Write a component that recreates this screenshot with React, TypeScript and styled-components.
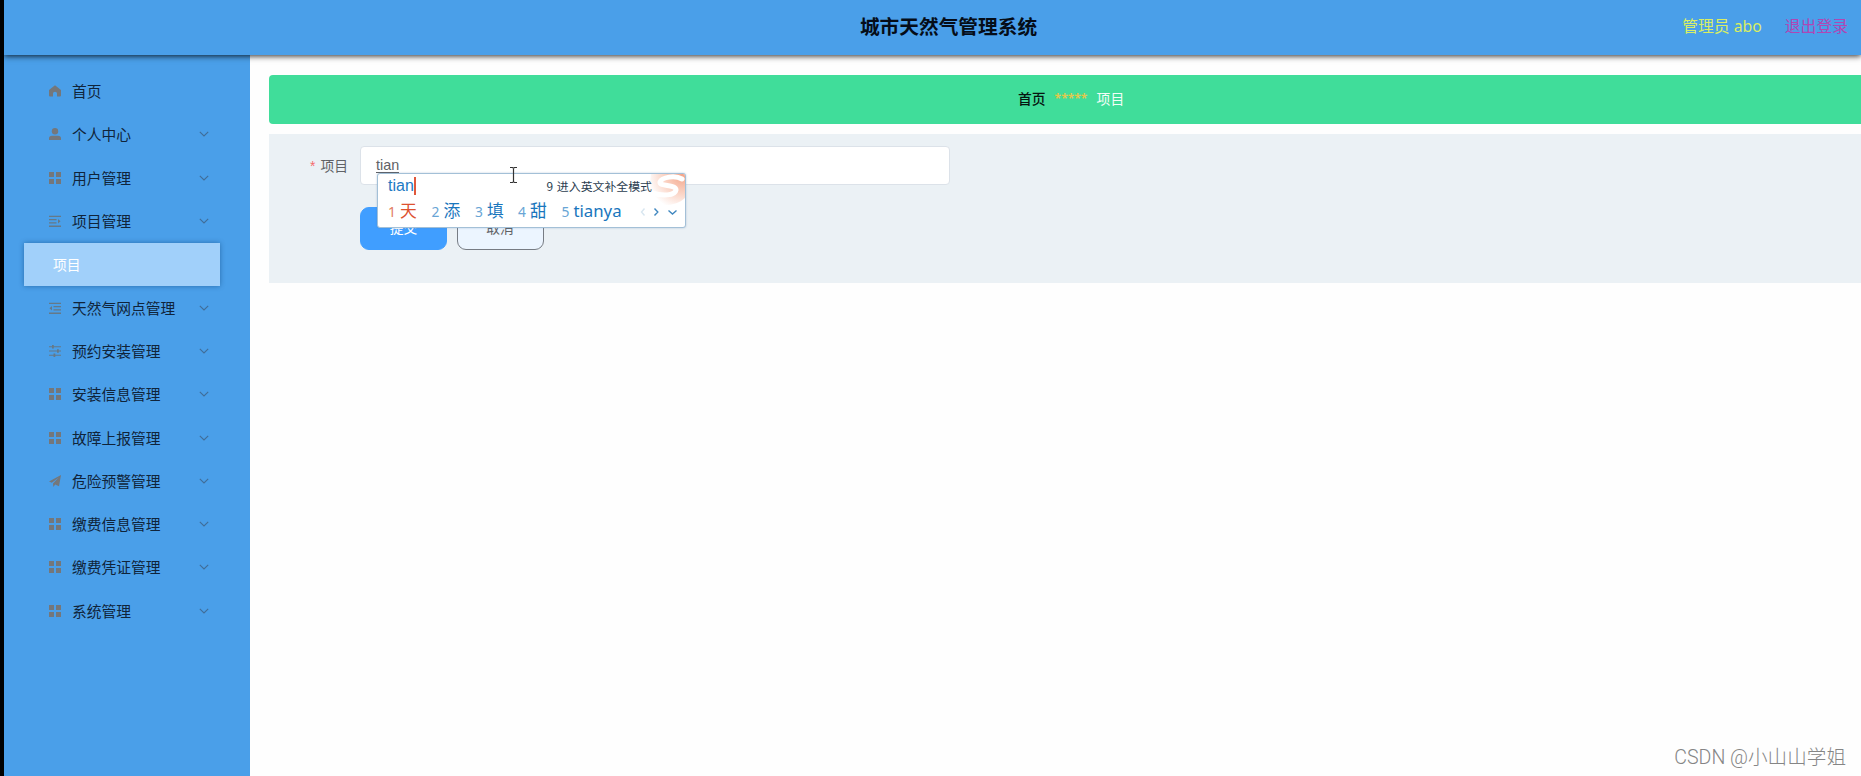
import React from "react";
import styled, { createGlobalStyle } from "styled-components";

const GlobalStyle = createGlobalStyle`
  * { box-sizing: border-box; }
  body { margin: 0; background: #fefefe; overflow: hidden; }
  #root { font-family: "Noto Sans CJK SC", sans-serif; }
`;

const Page = styled.div`
  display: flex;
  flex-direction: column;
  position: relative;
  height: 776px;
  width: 1861px;
  overflow: hidden;
  border-left: 4px solid #000;
`;

const Header = styled.header`
  position: relative;
  z-index: 2;
  flex: none;
  display: grid;
  grid-template-columns: 1fr auto 1fr;
  align-items: center;
  height: 55px;
  padding: 0 13px 4px 45px;
  background: #4a9fe9;
  box-shadow: 0 1px 6px rgba(0, 0, 0, 0.85);
`;

const Title = styled.h1`
  grid-column: 2;
  margin: 0;
  font-size: 19.7px;
  line-height: 30px;
  font-weight: 700;
  color: #050d18;
`;

const Account = styled.div`
  display: flex;
  justify-content: flex-end;
  gap: 23px;
  font-size: 15.8px;
  line-height: 24px;
`;

const AccountText = styled.span<{ $color: string }>`
  color: ${(p) => p.$color};
  font-family: "Noto Sans", "Noto Sans CJK SC", sans-serif;
  white-space: nowrap;
`;

const Body = styled.div`
  flex: 1;
  display: flex;
  min-height: 0;
`;

const Sidebar = styled.nav`
  flex: none;
  width: 246px;
  padding: 15px 30px 0 20px;
  background: #4a9fe9;
`;

const MenuRow = styled.div`
  display: flex;
  align-items: center;
  height: 43.3px;
  padding: 0 11px 1px 25px;
  color: #10243a;
  font-size: 14.75px;
  line-height: 22px;
  svg { flex: none; }
`;

const MenuLabel = styled.span`
  flex: 1;
  margin-left: 11px;
`;

const ActiveRow = styled.div`
  display: flex;
  align-items: center;
  height: 43.3px;
  padding: 0 0 2px 29px;
  color: #fff;
  font-size: 13.8px;
  background: #a1d0fa;
  box-shadow: 0 0 5px rgba(0, 50, 100, 0.45);
`;

const Main = styled.main`
  flex: 1;
  min-width: 0;
  padding: 19.5px 0 0 19px;
`;

const Crumbs = styled.div`
  display: flex;
  align-items: center;
  gap: 9px;
  height: 49.5px;
  padding: 0 0 2px 749px;
  border-radius: 4px 0 0 4px;
  background: #40dd9a;
  font-size: 13.8px;
`;

const Crumb = styled.span<{ $current?: boolean }>`
  color: ${(p) => (p.$current ? "#f2fdf8" : "#06150f")};
  font-weight: ${(p) => (p.$current ? 400 : 500)};
`;

const Stars = styled.span`
  font-family: "Open Sans", sans-serif;
  font-size: 12px;
  width: 33px;
  font-weight: 700;
  color: #dfc94e;
`;

const Panel = styled.section`
  height: 149px;
  margin-top: 10px;
  padding: 12px 0 0 91px;
  background: #ebf1f5;
`;

const Field = styled.label`
  display: flex;
  align-items: center;
  margin-left: -50px;
`;

const FieldLabel = styled.span`
  width: 50px;
  padding-bottom: 1px;
  font-size: 13.8px;
  color: #606266;
  white-space: nowrap;
`;

const Required = styled.span`
  margin-right: 5px;
  font-family: "Liberation Sans", sans-serif;
  color: #f56c6c;
`;

const Input = styled.div`
  width: 590px;
  height: 38.5px;
  padding: 8px 15px;
  border: 1px solid #dce2e9;
  border-radius: 4px;
  background: #fff;
  font: 14.4px/20px "Liberation Sans", sans-serif;
  color: #606266;
`;

const Composing = styled.span`
  display: inline-block;
  height: 18px;
  line-height: 20px;
  border-bottom: 1px solid #606266;
`;

const Actions = styled.div`
  display: flex;
  gap: 9.5px;
  margin-top: 22px;
`;

const Button = styled.button<{ $primary?: boolean }>`
  width: 87px;
  height: 43.5px;
  padding: 0 0 3px;
  border: 1px solid ${(p) => (p.$primary ? "#409eff" : "#777c84")};
  border-radius: 9px;
  background: ${(p) => (p.$primary ? "#409eff" : "#ecf5ff")};
  color: ${(p) => (p.$primary ? "#fff" : "#606266")};
  font: 13.8px "Noto Sans CJK SC", sans-serif;
`;

const Ime = styled.div`
  position: absolute;
  z-index: 5;
  left: 373px;
  top: 173px;
  width: 309px;
  height: 54.5px;
  overflow: hidden;
  border: 1px solid #a3c0d7;
  border-radius: 3px;
  background: #fff;
  box-shadow: 0 0 2px rgba(80, 120, 160, 0.4);
`;

const ImeTop = styled.div`
  position: relative;
  display: flex;
  justify-content: space-between;
  align-items: center;
  height: 23px;
  padding: 0 33px 0 10px;
`;

const ImeTyped = styled.span`
  height: 18px;
  border-right: 2px solid #e0583c;
  font: 16px/18px "Liberation Sans", sans-serif;
  color: #1d7ac4;
`;

const ImeHint = styled.span`
  font-size: 11.9px;
  line-height: 18px;
  word-spacing: 1px;
  color: #2b3d50;
`;

const ImeCandidates = styled.div`
  position: relative;
  display: flex;
  align-items: center;
  height: 29px;
  padding-left: 10px;
`;

const Candidate = styled.span<{ $first?: boolean; $w: number }>`
  display: flex;
  align-items: baseline;
  gap: 4px;
  flex: none;
  width: ${(p) => p.$w}px;
  font: 16.8px/26px "Noto Sans", "Noto Sans CJK SC", sans-serif;
  color: ${(p) => (p.$first ? "#dd5230" : "#1976bd")};
  small {
    font-size: 13.8px;
    color: ${(p) => (p.$first ? "#e27a60" : "#69a5d5")};
  }
`;

const SogouMark = styled.svg`
  position: absolute;
  right: 0;
  top: 0;
`;

const Pointer = styled.svg`
  position: absolute;
  z-index: 6;
  left: 505px;
  top: 166px;
`;

const Watermark = styled.div`
  position: absolute;
  right: 15px;
  bottom: 3px;
  font: 300 19.6px/30px "Roboto", "Noto Sans CJK SC", sans-serif;
  color: #858585;
  white-space: nowrap;
`;

type IconName = "home" | "user" | "grid" | "fold" | "unfold" | "sliders" | "plane";

const shapes: Record<IconName, React.ReactNode> = {
  home: <path d="M6 .2 12 5V10.6Q12 11.5 11 11.5H8V8.5Q8 6.8 6 6.8T4 8.5V11.5H1Q0 11.5 0 10.6V5Z" />,
  user: (
    <>
      <circle cx="6" cy="3.2" r="3.2" />
      <path d="M0 12V10.6Q0 7.8 3 7.8H9Q12 7.8 12 10.6V12Z" />
    </>
  ),
  grid: <path d="M0 0H5V5H0ZM7 0H12V5H7ZM0 7H5V12H0ZM7 7H12V12H7Z" />,
  fold: <path d="M0 .7H12V2H0ZM0 4H7.5V5.3H0ZM0 7.2H7.5V8.5H0ZM0 10.5H12V12H0ZM9 4 11.5 6.2 9 8.4Z" />,
  unfold: <path d="M0 .7H12V2H0ZM4.5 4H12V5.3H4.5ZM4.5 7.2H12V8.5H4.5ZM0 10.5H12V12H0ZM3 4 .5 6.2 3 8.4Z" />,
  sliders: (
    <path d="M0 1.2H12V2.2H0ZM0 5.5H12V6.5H0ZM0 9.8H12V10.8H0ZM3 0H4.8V3.4H3ZM8 4.3H9.8V7.7H8ZM4.5 8.6H6.3V12H4.5Z" />
  ),
  plane: <path d="M12 0 10 11.2 6.2 9.6 4.3 12 4 8.4 9.7 2.4 2.8 7.8 0 6.5Z" />,
};

const MenuIcon = ({ name }: { name: IconName }) => (
  <svg width="12" height="12" viewBox="0 0 12 12" fill={/fold|sliders/.test(name) ? "#657988" : "#74777b"}>
    {shapes[name]}
  </svg>
);

const Chevron = () => (
  <svg width="10" height="6" viewBox="0 0 10 6" fill="none" stroke="#416d98" strokeWidth="1.1">
    <path d="M.8.8 5 4.9 9.2.8" />
  </svg>
);

const menu: { icon: IconName; label: string; leaf?: boolean; child?: string }[] = [
  { icon: "home", label: "首页", leaf: true },
  { icon: "user", label: "个人中心" },
  { icon: "grid", label: "用户管理" },
  { icon: "fold", label: "项目管理", child: "项目" },
  { icon: "unfold", label: "天然气网点管理" },
  { icon: "sliders", label: "预约安装管理" },
  { icon: "grid", label: "安装信息管理" },
  { icon: "grid", label: "故障上报管理" },
  { icon: "plane", label: "危险预警管理" },
  { icon: "grid", label: "缴费信息管理" },
  { icon: "grid", label: "缴费凭证管理" },
  { icon: "grid", label: "系统管理" },
];

const candidates: [string, number][] = [
  ["天", 43.5],
  ["添", 43.5],
  ["填", 43],
  ["甜", 43.5],
  ["tianya", 77],
];

export default function App() {
  return (
    <>
      <GlobalStyle />
      <Page>
        <Header>
          <Title>城市天然气管理系统</Title>
          <Account>
            <AccountText $color="#d9ee63">管理员 abo</AccountText>
            <AccountText $color="#b046b4">退出登录</AccountText>
          </Account>
        </Header>
        <Body>
          <Sidebar>
            {menu.map((m) => (
              <React.Fragment key={m.label}>
                <MenuRow>
                  <MenuIcon name={m.icon} />
                  <MenuLabel>{m.label}</MenuLabel>
                  {!m.leaf && <Chevron />}
                </MenuRow>
                {m.child && <ActiveRow>{m.child}</ActiveRow>}
              </React.Fragment>
            ))}
          </Sidebar>
          <Main>
            <Crumbs>
              <Crumb>首页</Crumb>
              <Stars>*****</Stars>
              <Crumb $current>项目</Crumb>
            </Crumbs>
            <Panel>
              <Field>
                <FieldLabel>
                  <Required>*</Required>项目
                </FieldLabel>
                <Input>
                  <Composing>tian</Composing>
                </Input>
              </Field>
              <Actions>
                <Button $primary>提交</Button>
                <Button>取消</Button>
              </Actions>
            </Panel>
          </Main>
        </Body>
        <Ime>
          <SogouMark width="38" height="34" viewBox="0 0 38 34" fill="none">
            <defs>
              <radialGradient id="mark" gradientUnits="userSpaceOnUse" cx="36" cy="0" r="36">
                <stop offset="0" stopColor="#f3a488" />
                <stop offset=".5" stopColor="#fad0c0" />
                <stop offset="1" stopColor="#fff" />
              </radialGradient>
            </defs>
            <path d="M4 0H38V24Q28 34 5 30Q2 14 4 0Z" fill="url(#mark)" />
            <path
              d="M35 5C28 1 15 3 13 8C12 13 29 10 29 16C28 22 15 22 5 19"
              stroke="#fff"
              strokeWidth="5"
              strokeLinecap="round"
            />
          </SogouMark>
          <ImeTop>
            <ImeTyped>tian</ImeTyped>
            <ImeHint>9 进入英文补全模式</ImeHint>
          </ImeTop>
          <ImeCandidates>
            {candidates.map(([word, w], i) => (
              <Candidate key={word} $first={i === 0} $w={w}>
                <small>{i + 1}</small>
                {word}
              </Candidate>
            ))}
            <svg width="38" height="10" viewBox="0 0 38 10" fill="none" strokeWidth="1.4">
              <path d="M5.5 1.5 2.5 5l3 3.5" stroke="#d8e6f0" />
              <path d="M15.5 1.5 18.8 5l-3.3 3.5M29.5 3.5l4 3.5 4-3.5" stroke="#4188c0" />
            </svg>
          </ImeCandidates>
        </Ime>
        <Pointer width="9" height="18" viewBox="0 0 9 18" fill="none" stroke="#333" strokeWidth="1.2">
          <path d="M1 1.5H3.5L4.5 2.2 5.5 1.5H8M4.5 2V16M1 16.5H3.5L4.5 15.8 5.5 16.5H8" />
        </Pointer>
        <Watermark>CSDN @小山山学姐</Watermark>
      </Page>
    </>
  );
}
